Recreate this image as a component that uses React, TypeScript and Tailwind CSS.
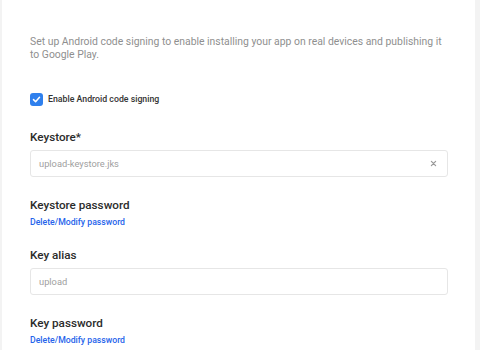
import {useState} from "react";

function FieldLabel({text, required}: {text: string; required?: boolean}) {
    return (
        <div className="text-[11.7px] leading-[16px] font-medium text-[#2b2b2b]">
            {text}
            {required && <span>*</span>}
        </div>
    );
}

export default function App() {
    const [enabled, setEnabled] = useState(true);

    return (
        <div className="h-[350px] overflow-hidden w-[480px] bg-[#f3f3f3] pl-[2px] pr-[5px] font-['Roboto',sans-serif]">
            <div className="h-full bg-white pl-[28px] pr-[27px] pt-[35px]">
                <p className="text-[10.4px] leading-[13px] text-[#8f8f8f]">
                    Set up Android code signing to enable installing your app on real devices and publishing it to Google Play.
                </p>

                <label className="mt-[32px] flex items-center gap-[5px] cursor-pointer">
                    <button
                        onClick={() => setEnabled(!enabled)}
                        className="w-[13px] h-[13px] rounded-[3px] bg-[#2f80ed] flex items-center justify-center"
                    >
                        {enabled && (
                            <svg viewBox="0 0 12 12" className="w-[9px] h-[9px]">
                                <path d="M2 6.2 L4.8 9 L10 3" fill="none" stroke="white" strokeWidth="2" strokeLinecap="round" strokeLinejoin="round"/>
                            </svg>
                        )}
                    </button>
                    <span className="text-[8.75px] font-medium text-[#333]">Enable Android code signing</span>
                </label>

                <div className="mt-[23px]">
                    <FieldLabel text="Keystore" required/>
                    <div className="mt-[5px] h-[27px] border border-[#e6e6e6] rounded-[3px] flex items-center justify-between px-[8px]">
                        <span className="text-[9.3px] text-[#a0a0a0]">upload-keystore.jks</span>
                        <svg viewBox="0 0 10 10" className="w-[7px] h-[7px] mr-[2px]">
                            <path d="M2 2 L8 8 M8 2 L2 8" stroke="#9a9a9a" strokeWidth="1.8" strokeLinecap="round"/>
                        </svg>
                    </div>
                </div>

                <div className="mt-[20px]">
                    <FieldLabel text="Keystore password"/>
                    <a className="block mt-[3px] text-[8.7px] leading-[12px] font-medium text-[#2563eb]">Delete/Modify password</a>
                </div>

                <div className="mt-[19px]">
                    <FieldLabel text="Key alias"/>
                    <div className="mt-[5px] h-[27px] border border-[#e6e6e6] rounded-[3px] flex items-center px-[8px]">
                        <span className="text-[9.3px] text-[#a0a0a0]">upload</span>
                    </div>
                </div>

                <div className="mt-[20px]">
                    <FieldLabel text="Key password"/>
                    <a className="block mt-[3px] text-[8.7px] leading-[12px] font-medium text-[#2563eb]">Delete/Modify password</a>
                </div>
            </div>
        </div>
    );
}
